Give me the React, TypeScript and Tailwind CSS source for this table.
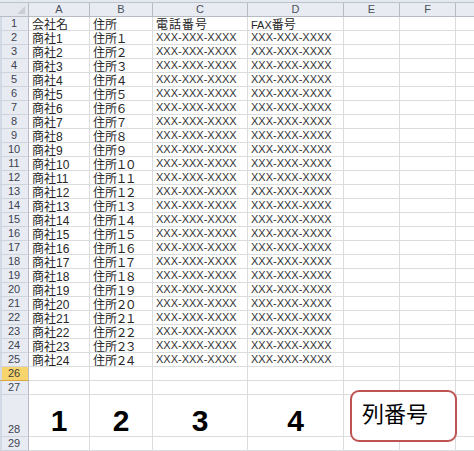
import React from "react";

const LATIN = "font-['Liberation_Sans','Noto_Sans_CJK_JP',sans-serif]";
const CJK = "font-['Noto_Sans_CJK_JP',sans-serif]";
const T = "inline-block h-[13px] leading-[13px]";

const COLS = [
  { key: "A", w: "w-[61px]" },
  { key: "B", w: "w-[63px]" },
  { key: "C", w: "w-[95px]" },
  { key: "D", w: "w-[96px]" },
  { key: "E", w: "w-[56px]" },
  { key: "F", w: "w-[56px]" },
];

function RowHeader({ n, tall, selected }: { n: number; tall?: boolean; selected?: boolean }) {
  const base =
    "shrink-0 w-[29px] flex justify-center border-r border-b border-r-[#b7bcc4] text-[11px] leading-[13px] shadow-[inset_2px_0_0_#d3dae5] " +
    LATIN;
  const size = tall ? "h-[42px] items-end" : "h-[14px] items-center";
  const color = selected
    ? "bg-[#f7d56c] border-b-[#d8a642] text-[#3c3c3c]"
    : "bg-[#e8ecf2] border-b-[#cfd4dc] text-[#3d4352]";
  return (
    <div className={`${base} ${size} ${color}`}>
      <span className={T}>{n}</span>
    </div>
  );
}

function Cell({ w, tall, children }: { w: string; tall?: boolean; children?: React.ReactNode }) {
  return (
    <div
      className={`shrink-0 ${w} ${tall ? "h-[42px]" : "h-[14px]"} border-r border-b border-[#dadcdd] flex items-center overflow-hidden whitespace-nowrap pl-[3px] leading-[13px] text-[#262626]`}
    >
      {children}
    </div>
  );
}

function Big({ w, children }: { w: string; children: React.ReactNode }) {
  return (
    <div
      className={`shrink-0 ${w} h-[42px] border-r border-b border-[#dadcdd] flex items-end justify-center text-[30px] font-bold leading-none text-black ${LATIN}`}
    >
      {children}
    </div>
  );
}

function Phone() {
  return <span className={`${T} text-[11px] text-[#333333] ${LATIN}`}>XXX-XXX-XXXX</span>;
}

function Filler() {
  return <div className="flex-1 border-b border-[#dadcdd]" />;
}

const fw = "０１２３４５６７８９";
const toFull = (n: number) =>
  String(n)
    .split("")
    .map((d) => fw[Number(d)])
    .join("");

function EmptyRow({ n, selected }: { n: number; selected?: boolean }) {
  return (
    <div className="flex">
      <RowHeader n={n} selected={selected} />
      {COLS.map((c) => (
        <Cell key={c.key} w={c.w} />
      ))}
      <Filler />
    </div>
  );
}

export default function App() {
  const rows = Array.from({ length: 24 }, (_, i) => i + 1);
  return (
    <div className={`relative w-[474px] h-[451px] overflow-hidden bg-white ${LATIN}`}>
      <div className="h-[3px] bg-[#e4e9f0] border-b border-[#bcc3cd]" />
      {/* column headers */}
      <div className="flex h-[14px]">
        <div className="relative shrink-0 w-[29px] h-[14px] border-r border-b border-[#b7bcc4] bg-[#e4e8ee]">
          <div className="absolute right-[3px] bottom-[2px] w-0 h-0 border-l-[8px] border-l-transparent border-b-[8px] border-b-[#c9ced6]" />
        </div>
        {COLS.map((c) => (
          <div
            key={c.key}
            className={`shrink-0 ${c.w} h-[14px] border-r border-b border-[#b7bcc4] bg-[#e8ecf2] flex items-center justify-center text-[11px] leading-[13px] text-[#4a4f5a]`}
          >
            <span className={T}>{c.key}</span>
          </div>
        ))}
        <div className="flex-1 border-b border-[#b7bcc4] bg-[#e8ecf2]" />
      </div>
      {/* row 1 */}
      <div className="flex">
        <RowHeader n={1} />
        <Cell w="w-[61px]">
          <span className={`${T} text-[12px] ${CJK}`}>会社名</span>
        </Cell>
        <Cell w="w-[63px]">
          <span className={`${T} text-[12px] ${CJK}`}>住所</span>
        </Cell>
        <Cell w="w-[95px]">
          <span className={`${T} text-[12px] tracking-[1px] ${CJK}`}>電話番号</span>
        </Cell>
        <Cell w="w-[96px]">
          <span className={`${T} text-[12px] ${CJK}`}>
            <span className={`text-[11px] ${LATIN}`}>FAX</span>番号
          </span>
        </Cell>
        <Cell w="w-[56px]" />
        <Cell w="w-[56px]" />
        <Filler />
      </div>
      {rows.map((i) => (
        <div key={i} className="flex">
          <RowHeader n={i + 1} />
          <Cell w="w-[61px]">
            <span className={`${T} text-[12px] ${CJK}`}>
              商社<span className={LATIN}>{i}</span>
            </span>
          </Cell>
          <Cell w="w-[63px]">
            <span className={`${T} text-[12px] ${CJK}`}>
              住所<span className="[font-feature-settings:'palt']">{toFull(i)}</span>
            </span>
          </Cell>
          <Cell w="w-[95px]">
            <Phone />
          </Cell>
          <Cell w="w-[96px]">
            <Phone />
          </Cell>
          <Cell w="w-[56px]" />
          <Cell w="w-[56px]" />
          <Filler />
        </div>
      ))}
      <EmptyRow n={26} selected />
      <EmptyRow n={27} />
      <div className="flex">
        <RowHeader n={28} tall />
        <Big w="w-[61px]">1</Big>
        <Big w="w-[63px]">2</Big>
        <Big w="w-[95px]">3</Big>
        <Big w="w-[96px]">4</Big>
        <Cell w="w-[56px]" tall />
        <Cell w="w-[56px]" tall />
        <Filler />
      </div>
      <EmptyRow n={29} />
      {/* callout box */}
      <div
        className={`absolute left-[350px] top-[390px] w-[107px] h-[52px] rounded-[9px] border-2 border-[#bf5353] bg-white pl-[10px] pt-[9px] text-[22px] leading-none text-black ${CJK}`}
      >
        列番号
      </div>
    </div>
  );
}
